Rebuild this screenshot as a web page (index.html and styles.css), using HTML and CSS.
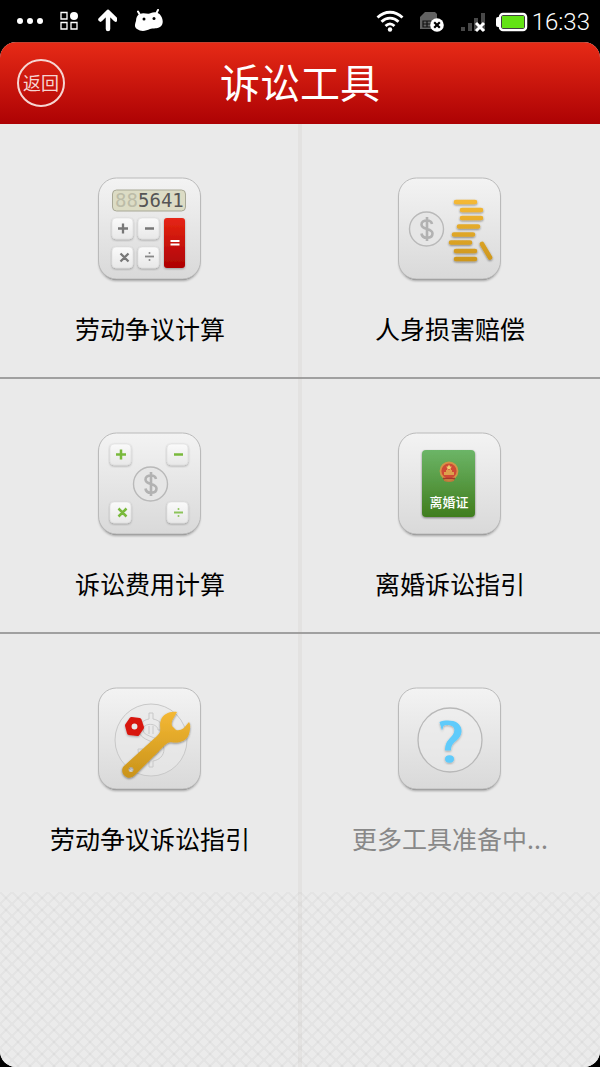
FILE: index.html
```html
<!DOCTYPE html>
<html lang="zh-CN">
<head>
    <meta charset="UTF-8">
    <meta name="viewport" content="width=device-width, initial-scale=1.0">
    <title>诉讼工具</title>
    <link rel="stylesheet" href="styles.css">
</head>
<body>
    <!-- shared gradients and symbols -->
    <svg class="defs" width="0" height="0" aria-hidden="true">
        <defs>
            <linearGradient id="tileFill" x1="0" y1="0" x2="0" y2="1">
                <stop offset="0" stop-color="#f3f3f3"/>
                <stop offset="1" stop-color="#d9d9d9"/>
            </linearGradient>
            <linearGradient id="keyFill" x1="0" y1="0" x2="0" y2="1">
                <stop offset="0" stop-color="#fafafa"/>
                <stop offset="1" stop-color="#e8e8e8"/>
            </linearGradient>
            <linearGradient id="redFill" x1="0" y1="0" x2="0" y2="1">
                <stop offset="0" stop-color="#e62614"/>
                <stop offset="1" stop-color="#ad0204"/>
            </linearGradient>
            <linearGradient id="greenFill" x1="0" y1="0" x2="0" y2="1">
                <stop offset="0" stop-color="#6cb567"/>
                <stop offset="1" stop-color="#407d1d"/>
            </linearGradient>
            <linearGradient id="goldFill" gradientUnits="userSpaceOnUse" x1="0" y1="30" x2="0" y2="98">
                <stop offset="0" stop-color="#f5b935"/>
                <stop offset="1" stop-color="#c9931a"/>
            </linearGradient>
            <filter id="shadow" x="-30%" y="-30%" width="160%" height="160%">
                <feDropShadow dx="0" dy="1" stdDeviation="1.2" flood-color="#000" flood-opacity="0.45"/>
            </filter>
            <filter id="keyShadow" x="-30%" y="-30%" width="160%" height="160%">
                <feDropShadow dx="0" dy="1" stdDeviation="0.8" flood-color="#000" flood-opacity="0.3"/>
            </filter>
            <symbol id="tile" viewBox="0 0 120 120">
                <rect x="9" y="10" width="101" height="100" rx="18" fill="#8a8a8a" filter="url(#keyShadow)"/>
                <rect x="8.500" y="8" width="102" height="101" rx="18" fill="url(#tileFill)" stroke="#bababa"/>
            </symbol>
            <symbol id="key" viewBox="0 0 26 26">
                <rect x="2" y="2" width="21" height="21" rx="4" fill="url(#keyFill)" stroke="#dcdcdc" stroke-width="0.6" filter="url(#keyShadow)"/>
            </symbol>
            <symbol id="coin" viewBox="0 0 40 40">
                <circle cx="20.500" cy="20" r="17" fill="#e6e6e6" stroke="#b9b9b9" stroke-width="1.4"/>
                <path d="M26 15C25.500 12.500 23.500 11.500 21 11.500C17.500 11.500 15.500 13 15.500 15.500C15.500 18 17.500 19 21 20C24.500 21 26.500 22.200 26.500 24.600C26.500 27.500 24 28.800 21 28.800C18 28.800 15.800 27.500 15.500 24.500M21 8V32" fill="none" stroke="#b2b2b2" stroke-width="2.600"/>
            </symbol>
        </defs>
    </svg>

    <div class="status-bar">
        <div class="status-left">
            <svg width="26" height="24" viewBox="0 0 26 24" fill="#fff" aria-hidden="true">
                <circle cx="3" cy="12" r="3"/><circle cx="13" cy="12" r="3"/><circle cx="23" cy="12" r="3"/>
            </svg>
            <svg width="20" height="24" viewBox="0 0 20 24" fill="none" stroke="#fff" stroke-width="1.300" aria-hidden="true">
                <path d="M1 3.500H7V10H1ZM1 13.500H7V20H1ZM11 13.500H17V20H11Z"/>
                <circle cx="14" cy="7" r="4" fill="#fff" stroke="none"/>
            </svg>
            <svg width="20" height="24" viewBox="0 0 20 24" fill="none" stroke="#fff" stroke-width="4.500" stroke-linecap="round" stroke-linejoin="round" aria-hidden="true">
                <path d="M11 20V4M3.500 10.500L11 3L18.500 10.500"/>
            </svg>
            <svg width="30" height="24" viewBox="0 0 30 24" aria-hidden="true">
                <path d="M6 6L4 2.500M22 5L24 1" stroke="#fff" stroke-width="2" stroke-linecap="round"/>
                <path d="M6 5C10 3 14 6 17 4C20 2.500 25 3 27 7C30 12 29 17 25 18.500C21 20 19 19 16 20C12 22 7 23 3 20C0 18 1 15 2 12C2 9 3 6 6 5Z" fill="#fff"/>
                <circle cx="10" cy="10" r="1.500"/><circle cx="20" cy="9.500" r="1.500"/>
            </svg>
        </div>
        <div class="status-right">
            <svg class="wifi" width="28" height="24" viewBox="0 0 28 24" fill="none" stroke="#fff" stroke-width="2.800" aria-hidden="true">
                <path d="M1.500 8.500C9 1.500 19 1.500 26.500 8.500M5.500 12.800C10.500 8 17.500 8 22.500 12.800M9.500 17C12.500 14.200 15.500 14.200 18.500 17"/>
                <circle cx="14" cy="20.500" r="2.200" fill="#fff" stroke="none"/>
            </svg>
            <svg class="sim" width="24" height="24" viewBox="0 0 24 24" aria-hidden="true">
                <path d="M5 3H15L17 5V20H0V8Z" fill="#626262"/>
                <path d="M3 12H14V18H3ZM3 15H14M7 12V18" fill="none" stroke="#111" stroke-width="1.200"/>
                <circle cx="17" cy="16" r="6.800" fill="#fff"/>
                <path d="M14.200 13.200L19.800 18.800M19.800 13.200L14.200 18.800" stroke="#000" stroke-width="2.200"/>
            </svg>
            <svg class="signal" width="26" height="24" viewBox="0 0 26 24" aria-hidden="true">
                <path d="M1 18H5V22H1ZM8 14H12V22H8ZM14 9H18V22H14ZM21 4H25V22H21Z" fill="#484848"/>
                <path d="M16 14L24 22M24 14L16 22" stroke="#fff" stroke-width="3"/>
            </svg>
            <svg class="battery" width="32" height="24" viewBox="0 0 32 24" aria-hidden="true">
                <path d="M4 8H2Q0 8 0 10V16Q0 18 2 18H4" fill="#fff"/>
                <rect x="4" y="5" width="26" height="16" rx="3" fill="#000" stroke="#fff" stroke-width="2.500"/>
                <rect x="6" y="7" width="22" height="12" fill="#63e315"/>
            </svg>
            <span class="clock">16:33</span>
        </div>
    </div>

    <div class="app">
        <header class="header">
            <a class="back" href="#">返回</a>
            <h1 class="title">诉讼工具</h1>
        </header>

        <main class="content">
            <nav class="tools">
                <a class="tool" href="#">
                    <svg class="icon" viewBox="0 0 120 120" aria-hidden="true">
                        <use href="#tile" width="120" height="120"/>
                        <rect x="22.500" y="20" width="73" height="21" rx="4" fill="#dcdcc5" stroke="#a8a896"/>
                        <text class="lcd ghost" x="25" y="37">88</text>
                        <text class="lcd" x="48" y="37">5641</text>
                        <use href="#key" x="20" y="46" width="26" height="26"/>
                        <use href="#key" x="46" y="46" width="26" height="26"/>
                        <use href="#key" x="20" y="75" width="26" height="26"/>
                        <use href="#key" x="46" y="75" width="26" height="26"/>
                        <path d="M28 58.500H38M33 53.500V63.500M55 58.500H64M30.500 83.500L38.500 91.500M38.500 83.500L30.500 91.500" stroke="#777" stroke-width="2.300"/>
                        <path d="M55 86.500H64" stroke="#888" stroke-width="1.800"/>
                        <circle cx="59.500" cy="83" r="1" fill="#888"/><circle cx="59.500" cy="90" r="1" fill="#888"/>
                        <rect x="74" y="48" width="21" height="50" rx="3" fill="url(#redFill)" filter="url(#keyShadow)"/>
                        <path d="M80.500 71H89.500M80.500 74.500H89.500" stroke="#fff" stroke-width="2"/>
                    </svg>
                    <span class="label">劳动争议计算</span>
                </a>
                <a class="tool" href="#">
                    <svg class="icon" viewBox="0 0 120 120" aria-hidden="true">
                        <use href="#tile" width="120" height="120"/>
                        <use href="#coin" x="16" y="39" width="40" height="40"/>
                        <g stroke="url(#goldFill)" stroke-width="4.600" stroke-linecap="round" filter="url(#shadow)">
                            <path d="M66 32L85 32.010M72 40L91 40.010M72 48L91 48.010M69 56.500L88 56.510M64 64.500L83 64.510M61 72.500L80 72.510M66 81L85 81.010M66 89L85 89.010M92 74L100 87.500"/>
                        </g>
                    </svg>
                    <span class="label">人身损害赔偿</span>
                </a>
                <a class="tool" href="#">
                    <svg class="icon" viewBox="0 0 120 120" aria-hidden="true">
                        <use href="#tile" width="120" height="120"/>
                        <use href="#key" x="18" y="17" width="26" height="26"/>
                        <use href="#key" x="75" y="17" width="26" height="26"/>
                        <use href="#key" x="18" y="75" width="26" height="26"/>
                        <use href="#key" x="75" y="75" width="26" height="26"/>
                        <use href="#coin" x="40" y="39" width="40" height="40"/>
                        <path d="M26 29.500H36M31 24.500V34.500M84 29.500H93M28.500 83.500L36.500 91.500M36.500 83.500L28.500 91.500" stroke="#79b93c" stroke-width="2.500"/>
                        <path d="M84 87.500H93" stroke="#8cc45a" stroke-width="2"/>
                        <circle cx="88.500" cy="84" r="1" fill="#8cc45a"/><circle cx="88.500" cy="91" r="1" fill="#8cc45a"/>
                    </svg>
                    <span class="label">诉讼费用计算</span>
                </a>
                <a class="tool" href="#">
                    <svg class="icon" viewBox="0 0 120 120" aria-hidden="true">
                        <use href="#tile" width="120" height="120"/>
                        <rect x="32" y="25" width="53" height="67" rx="4" fill="url(#greenFill)" filter="url(#shadow)"/>
                        <path d="M53 51L54 56Q59 58 64 56L65 51Z" fill="#c0793c"/>
                        <circle cx="59" cy="46" r="8.500" fill="#cf4a35" stroke="#d29447" stroke-width="1.800"/>
                        <path d="M54 50V47H56V45H62V47H64V50Z" fill="#dda04c"/>
                        <path d="M59 39.500L60 41.500L62 41.700L60.500 43L61 45L59 44L57 45L57.500 43L56 41.700L58 41.500Z" fill="#f0d070"/>
                        <path d="M53 53.500H65" stroke="#a33a2a" stroke-width="1.500"/>
                        <text class="booklet" x="59" y="82" text-anchor="middle">离婚证</text>
                    </svg>
                    <span class="label">离婚诉讼指引</span>
                </a>
                <a class="tool" href="#">
                    <svg class="icon" viewBox="0 0 120 120" aria-hidden="true">
                        <use href="#tile" width="120" height="120"/>
                        <circle cx="61" cy="60" r="36" fill="#e9e9e9" fill-opacity="0.600" stroke="#c8c8c8"/>
                        <path d="M59 33H63V39C69 40 73 44 73 50H68C68 43 53 42 53 50C53 58 74 56 74 69C74 76 69 80 63 81V87H59V81C52 80 48 76 48 69H53C53 78 69 78 69 69C69 60 49 62 49 50C49 44 53 40 59 39Z" fill="none" stroke="#c8c8c8"/>
                        <path d="M59 46V54M63 46V54M59 64V75M63 64V75" stroke="#c8c8c8"/>
                        <g filter="url(#keyShadow)">
                            <path d="M41.500 39L49.500 40L52 47.500L47.500 54L39 53L37 45.500Z" fill="#e8e8e8" stroke="#d8150e" stroke-width="4" stroke-linejoin="round"/>
                            <circle cx="44.500" cy="46.500" r="5.200" fill="none" stroke="#d8150e" stroke-width="4.500"/>
                        </g>
                        <path fill-rule="evenodd" d="M87 32C80 31 73 34 71 40C69 44 71 48 70 52Q69 54 67 56L34 86C31 89 32 94 35 96C38 99 42 98 45 95L75 65Q78 62 81 62C88 64 97 61 99 54C100 50 101 45 99 42L94 48Q90 51 86 50L82 46Q81 42 83 39ZM41 87A2.500 2.500 0 1 0 41 92A2.500 2.500 0 1 0 41 87Z" fill="url(#goldFill)" filter="url(#shadow)"/>
                    </svg>
                    <span class="label">劳动争议诉讼指引</span>
                </a>
                <a class="tool disabled" href="#">
                    <svg class="icon" viewBox="0 0 120 120" aria-hidden="true">
                        <use href="#tile" width="120" height="120"/>
                        <circle cx="60" cy="60" r="32" fill="#eee" fill-opacity="0.500" stroke="#b8b8b8" stroke-width="1.300"/>
                        <path d="M49.500 42C55 40 63 40 67.500 43C73 47 73 55 67 60C63 63.500 61 65 61 70.500H55C55 64 57 61 61 57C65 53 65.500 48 62 46C59 44.500 55 45 53.500 46L52 50.500Z" fill="#5ecbfb" filter="url(#keyShadow)"/>
                        <ellipse cx="59.500" cy="79" rx="4.500" ry="3.700" fill="#5ecbfb" filter="url(#keyShadow)"/>
                    </svg>
                    <span class="label">更多工具准备中...</span>
                </a>
            </nav>
        </main>
    </div>
</body>
</html>
```
FILE: styles.css
```css
* {
    box-sizing: border-box;
}

body {
    margin: 0;
    min-height: 100vh;
    display: flex;
    flex-direction: column;
    background-color: #000;
    font-family: "Noto Sans CJK SC", sans-serif;
}

a {
    text-decoration: none;
}

.defs {
    position: absolute;
}

.status-bar {
    display: flex;
    justify-content: space-between;
    align-items: center;
    height: 42px;
    padding: 0 10px 0 17px;
    color: #fff;
}

.status-left,
.status-right {
    display: flex;
    align-items: center;
}

.status-left {
    gap: 17px;
}

.status-right {
    gap: 16px;
}

.signal,
.battery {
    margin-right: -6px;
}

.clock {
    margin-left: -6px;
    padding-top: 2px;
    font-family: Roboto, sans-serif;
    font-size: 24px;
    font-weight: 300;
    line-height: 40px;
}

.app {
    flex: 1;
    display: flex;
    flex-direction: column;
    overflow: hidden;
    border-radius: 16px;
    background-color: #ebebeb;
}

.header {
    display: grid;
    grid-template-columns: 48px 1fr 48px;
    align-items: center;
    height: 82px;
    padding: 0 17px 2px;
    background: linear-gradient(#e62a16, #ad0204);
    border-top: 1px solid #c6402f;
}

.back {
    display: flex;
    justify-content: center;
    height: 48px;
    border: 2px solid #f6d5d2;
    border-radius: 50%;
    color: #f6d5d2;
    font-size: 18px;
    line-height: 42px;
}

.title {
    align-self: start;
    margin: 0;
    color: #fff;
    font-size: 40px;
    font-weight: 400;
    line-height: 76px;
    text-align: center;
}

.content {
    position: relative;
    flex: 1;
    background-color: #ebebeb;
    background-image:
        linear-gradient(45deg, transparent 45%, rgba(0, 0, 0, 0.03) 45% 55%, transparent 55%),
        linear-gradient(-45deg, transparent 45%, rgba(0, 0, 0, 0.03) 45% 55%, transparent 55%);
    background-size: 12px 12px;
}

/* divider between the two columns */
.content::after {
    content: "";
    position: absolute;
    top: 0;
    bottom: 0;
    left: 50%;
    width: 4px;
    margin-left: -2px;
    background-color: rgba(170, 160, 150, 0.1);
}

.tools {
    display: grid;
    grid-template-columns: 1fr 1fr;
}

.tool {
    display: flex;
    flex-direction: column;
    align-items: center;
    height: 255px;
    padding-top: 46px;
    background-color: #eaeaea;
    border-bottom: 2px solid #a0a0a0;
    color: #000;
}

.tool:nth-last-child(-n+2) {
    height: 258px;
    border-bottom: none;
}

.icon {
    width: 120px;
    height: 120px;
}

.label {
    margin-top: 20px;
    font-size: 25px;
    line-height: 36px;
}

.disabled {
    color: #888;
}

.lcd {
    font-family: "DejaVu Sans Mono", monospace;
    font-size: 19px;
    fill: #555;
}

.ghost {
    fill: #bcbca8;
}

.booklet {
    font-size: 13px;
    font-weight: 500;
    fill: #fff;
}
```
